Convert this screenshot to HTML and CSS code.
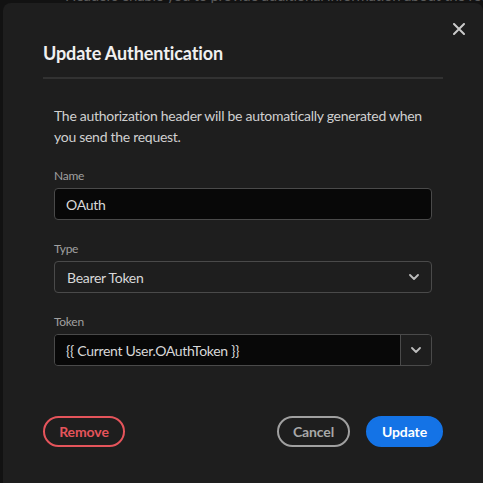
FILE: index.html
```html
<!DOCTYPE html>
<html lang="en">
<head>
<meta charset="utf-8">
<title>Update Authentication</title>
<link rel="stylesheet" href="styles.css">
</head>
<body>
<p class="backdrop-text">Headers enable you to provide additional information about the request.</p>
<div class="dialog" role="dialog" aria-labelledby="dlg-title">
  <button class="close" aria-label="Close">
    <svg width="12" height="12" viewBox="0 0 12 12"><path d="M1 1L11 11M11 1L1 11" stroke="currentColor" stroke-width="2" stroke-linecap="round"/></svg>
  </button>
  <h2 class="title" id="dlg-title">Update Authentication</h2>
  <div class="divider"></div>
  <div class="content">
    <p class="desc">The authorization header will be automatically generated when you send the request.</p>
    <div class="field">
      <label class="label">Name</label>
      <div class="input">OAuth</div>
    </div>
    <div class="field">
      <label class="label">Type</label>
      <div class="select">
        <span>Bearer Token</span>
        <svg class="chev" width="10" height="6" viewBox="0 0 10 6"><path d="M1 1L5 5L9 1" fill="none" stroke="currentColor" stroke-width="1.8" stroke-linecap="round" stroke-linejoin="round"/></svg>
      </div>
    </div>
    <div class="field">
      <label class="label">Token</label>
      <div class="combo">
        <div class="combo-input">{{ Current User.OAuthToken }}</div>
        <div class="combo-btn">
          <svg class="chev" width="10" height="6" viewBox="0 0 10 6"><path d="M1 1L5 5L9 1" fill="none" stroke="currentColor" stroke-width="1.8" stroke-linecap="round" stroke-linejoin="round"/></svg>
        </div>
      </div>
    </div>
  </div>
  <div class="footer">
    <button class="btn btn-remove">Remove</button>
    <div class="spacer"></div>
    <button class="btn btn-cancel">Cancel</button>
    <button class="btn btn-update">Update</button>
  </div>
</div>
</body>
</html>
```

FILE: styles.css
```css
* { box-sizing: border-box; }
html, body { height: 100%; }
body {
  margin: 0;
  background: #121212;
  font-family: Lato, "Noto Sans", sans-serif;
  letter-spacing: -0.28px;
  overflow: hidden;
  position: relative;
}
.backdrop-text {
  position: absolute;
  top: -14px;
  left: 65px;
  margin: 0;
  font-size: 15px;
  color: #5a5a5a;
  white-space: nowrap;
}
.dialog {
  position: relative;
  margin: 3px 0 0 3px;
  width: 480px;
  height: 490px;
  background: #1e1e1e;
  border-radius: 8px 8px 0 0;
  padding: 38px 40px 0 40px;
}
.close {
  position: absolute;
  top: 20px;
  left: 450px;
  width: 12px;
  height: 12px;
  padding: 0;
  border: 0;
  background: none;
  color: #cacaca;
  display: flex;
}
.title {
  margin: 0;
  font-size: 18px;
  font-weight: 700;
  letter-spacing: -0.1px;
  color: #f0f0f0;
  line-height: 24px;
}
.divider {
  height: 2px;
  background: #323232;
  margin-top: 12px;
}
.content {
  padding: 0 11px;
}
.desc {
  margin: 26px 0 0 0;
  font-size: 14px;
  line-height: 21px;
  color: #d0d0d0;
}
.field {
  display: flex;
  flex-direction: column;
}
.field:first-of-type { margin-top: 21px; }
.field + .field { margin-top: 21px; }
.label {
  font-size: 12px;
  line-height: 15px;
  color: #a0a0a0;
  margin-bottom: 5px;
}
.input, .select, .combo {
  height: 32px;
  border: 1px solid #4a4a4a;
  border-radius: 4px;
  font-size: 14px;
  color: #d8d8d8;
}
.input {
  background: #080808;
  padding: 0 11px;
  display: flex;
  align-items: center;
}
.select {
  background: #1e1e1e;
  padding: 0 12px;
  display: flex;
  align-items: center;
  justify-content: space-between;
}
.chev { color: #bdbdbd; }
.combo {
  display: flex;
  overflow: hidden;
}
.combo-input {
  flex: 1;
  background: #080808;
  padding: 0 11px;
  display: flex;
  align-items: center;
  border-right: 1px solid #4a4a4a;
}
.combo-btn {
  width: 30px;
  display: flex;
  align-items: center;
  justify-content: center;
  background: #1e1e1e;
}
.footer {
  display: flex;
  align-items: center;
  margin-top: 50px;
  gap: 16px;
}
.spacer { flex: 1; }
.btn {
  height: 31px;
  border-radius: 16px;
  font-family: inherit;
  font-size: 14px;
  font-weight: 700;
  letter-spacing: -0.1px;
  padding: 0;
  background: transparent;
  border: 2px solid;
}
.btn-remove { color: #e5545b; border-color: #e5545b; width: 82px; }
.btn-cancel { color: #a8a8a8; border-color: #a0a0a0; width: 73px; }
.btn-update { color: #fff; background: #1473e6; border-color: #1473e6; width: 77px; }
```
